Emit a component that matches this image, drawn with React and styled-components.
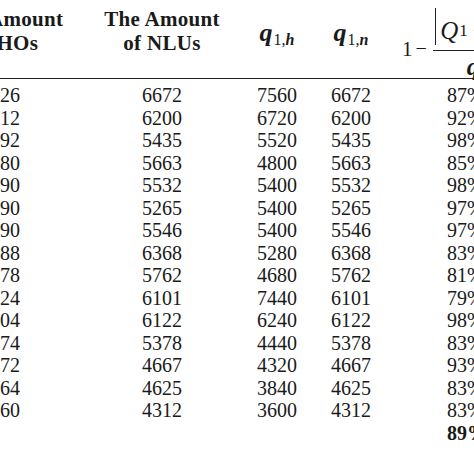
import React from 'react';
import styled, { createGlobalStyle } from 'styled-components';

const GlobalStyle = createGlobalStyle`
  html, body {
    margin: 0;
    padding: 0;
    background: #ffffff;
  }
`;

const Frame = styled.div`
  width: 474px;
  height: 474px;
  overflow: hidden;
  background: #ffffff;
  color: #1a1a1a;
  font-family: 'Liberation Serif', 'Times New Roman', serif;
`;

const Table = styled.table`
  margin-left: -76px;
  border-collapse: collapse;
  table-layout: fixed;
  width: 700px;
`;

const HeadCell = styled.th`
  height: ${p => (p.$flush ? 78 : 71)}px;
  padding: ${p => (p.$flush ? '0' : '7px 0 0')};
  padding-left: ${p => (p.$nudge ? `${p.$nudge}px` : '0')};
  vertical-align: top;
  text-align: ${p => (p.$left ? 'left' : 'center')};
  font-size: 21px;
  font-weight: 700;
  letter-spacing: 0.3px;
  line-height: 24px;
  white-space: nowrap;
  border-bottom: 1.5px solid #222;
`;

const Cell = styled.td`
  padding: ${p => (p.$first ? '5px 0 0' : '0')};
  padding-left: ${p => (p.$pad ? `${p.$pad}px` : '0')};
  padding-right: ${p => (p.$shift ? `${p.$shift}px` : '0')};
  text-align: ${p => (p.$left ? 'left' : 'center')};
  font-size: 20px;
  font-weight: ${p => (p.$bold ? 700 : 400)};
  line-height: 22.5px;
  white-space: nowrap;
  vertical-align: top;
`;

const MathVar = styled.span`
  display: inline-block;
  margin-top: 13px;
  font-size: 26px;
  font-style: italic;
  font-weight: 700;
  line-height: 26px;
  letter-spacing: 0;
`;

const Sub = styled.sub`
  font-size: ${p => p.$size || 16}px;
  font-weight: 400;
  font-style: normal;
  vertical-align: -4px;
  margin-left: 1px;
  i {
    font-style: italic;
    font-weight: ${p => (p.$boldVar ? 700 : 400)};
  }
`;

const Formula = styled.div`
  display: flex;
  align-items: flex-start;
  padding-left: 14px;
  height: 78px;
  font-weight: 400;
  letter-spacing: 0;
`;

const One = styled.span`
  margin-top: 39px;
  font-size: 21px;
  line-height: 21px;
`;

const Minus = styled.span`
  margin: 38px 6px 0 3px;
  font-size: 20px;
  line-height: 21px;
`;

const Fraction = styled.span`
  display: inline-flex;
  flex-direction: column;
  align-items: center;
`;

const Numer = styled.span`
  display: flex;
  align-items: flex-end;
  box-sizing: border-box;
  height: 51px;
  padding: 0 4px 7px 2px;
  border-bottom: 1.5px solid #222;
  font-style: italic;
  font-size: 25px;
  line-height: 25px;
`;

const AbsBar = styled.span`
  display: inline-block;
  width: 1.5px;
  height: 37px;
  margin: ${p => (p.$end ? '0 0 -2px 4px' : '0 4px -2px 0')};
  background: #222;
`;

const Op = styled.span`
  font-style: normal;
  margin: 0 5px;
`;

const Denom = styled.span`
  padding-top: 5px;
  font-weight: 700;
  font-style: italic;
  font-size: 25px;
  line-height: 22px;
`;

const cols = [160, 156, 74, 74, 236];

const rows = [
  ['7126', '6672', '7560', '6672', '87%'],
  ['6712', '6200', '6720', '6200', '92%'],
  ['5592', '5435', '5520', '5435', '98%'],
  ['4880', '5663', '4800', '5663', '85%'],
  ['5490', '5532', '5400', '5532', '98%'],
  ['5490', '5265', '5400', '5265', '97%'],
  ['5490', '5546', '5400', '5546', '97%'],
  ['5388', '6368', '5280', '6368', '83%'],
  ['4778', '5762', '4680', '5762', '81%'],
  ['7624', '6101', '7440', '6101', '79%'],
  ['6404', '6122', '6240', '6122', '98%'],
  ['4574', '5378', '4440', '5378', '83%'],
  ['4472', '4667', '4320', '4667', '93%'],
  ['3964', '4625', '3840', '4625', '83%'],
  ['3760', '4312', '3600', '4312', '83%'],
];

export default function App() {
  return (
    <Frame>
      <GlobalStyle />
      <Table>
        <colgroup>
          {cols.map((w, i) => (
            <col key={i} style={{ width: w }} />
          ))}
        </colgroup>
        <thead>
          <tr>
            <HeadCell $nudge={3}>
              The Amount
              <br />
              of HOs
            </HeadCell>
            <HeadCell>
              The Amount
              <br />
              of NLUs
            </HeadCell>
            <HeadCell>
              <MathVar>
                q
                <Sub $boldVar>
                  1,<i>h</i>
                </Sub>
              </MathVar>
            </HeadCell>
            <HeadCell>
              <MathVar>
                q
                <Sub $boldVar>
                  1,<i>n</i>
                </Sub>
              </MathVar>
            </HeadCell>
            <HeadCell $left $flush>
              <Formula>
                <One>1</One>
                <Minus>−</Minus>
                <Fraction>
                  <Numer>
                    <AbsBar />
                    Q<Sub $size={17}>1</Sub>
                    <Op>−</Op>
                    q
                    <Sub $size={17}>
                      1,<i>h</i>
                    </Sub>
                    <AbsBar $end />
                  </Numer>
                  <Denom>
                    q
                    <Sub $size={17} $boldVar>
                      1,<i>h</i>
                    </Sub>
                  </Denom>
                </Fraction>
              </Formula>
            </HeadCell>
          </tr>
        </thead>
        <tbody>
          {rows.map((r, i) => (
            <tr key={i}>
              {r.slice(0, 4).map((v, j) => (
                <Cell key={j} $first={i === 0} $shift={j === 0 ? 8 : 0}>
                  {v}
                </Cell>
              ))}
              <Cell $first={i === 0} $left $pad={59}>
                {r[4]}
              </Cell>
            </tr>
          ))}
          <tr>
            <Cell />
            <Cell />
            <Cell />
            <Cell />
            <Cell $left $pad={59} $bold>
              89%
            </Cell>
          </tr>
        </tbody>
      </Table>
    </Frame>
  );
}
